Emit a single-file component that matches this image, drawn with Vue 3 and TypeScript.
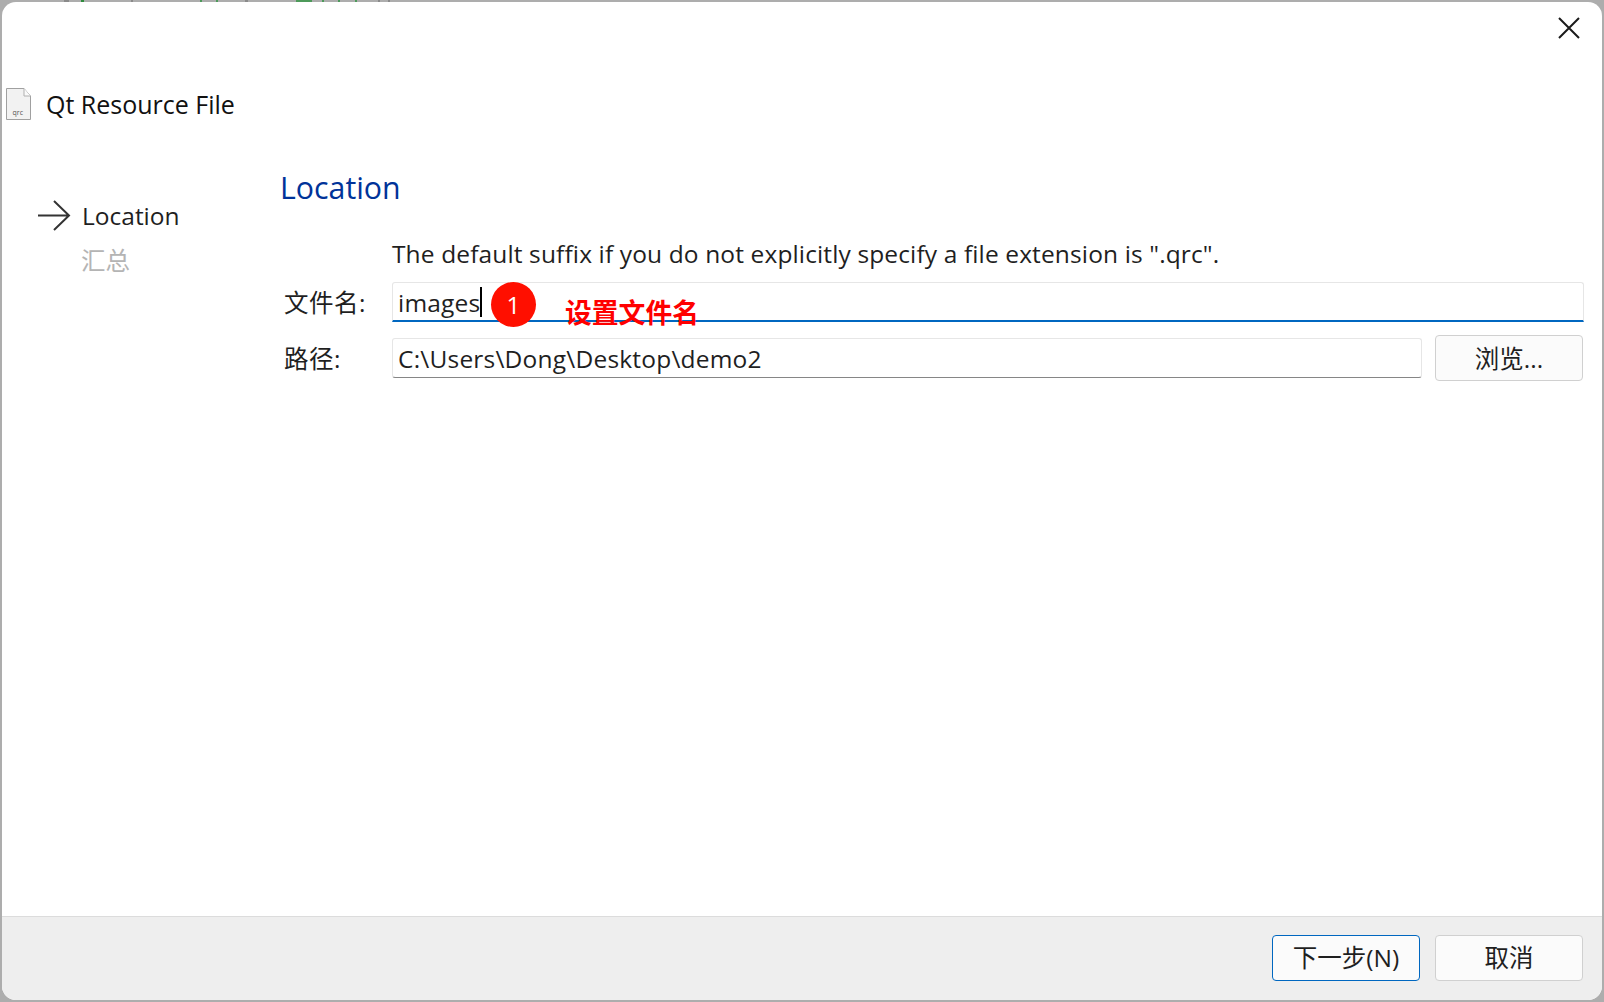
<script setup lang="ts">
const hint = 'The default suffix if you do not explicitly specify a file extension is ".qrc".'
const marks = [
  { x: 81, w: 3, c: '#2e8b3d' },
  { x: 64, w: 5, c: '#8a8a8a' },
  { x: 131, w: 2, c: '#8a8a8a' },
  { x: 200, w: 2, c: '#4d9a5a' },
  { x: 216, w: 2, c: '#4d9a5a' },
  { x: 245, w: 3, c: '#8a8a8a' },
  { x: 296, w: 16, c: '#4d9a5a' },
  { x: 322, w: 2, c: '#4d9a5a' },
  { x: 338, w: 2, c: '#4d9a5a' },
  { x: 355, w: 2, c: '#4d9a5a' },
  { x: 378, w: 2, c: '#8a8a8a' },
  { x: 388, w: 2, c: '#8a8a8a' }
]
</script>

<template>
  <div class="desk">
    <i v-for="m in marks" :key="m.x" class="mark" :style="{ left: m.x + 'px', width: m.w + 'px', background: m.c }"></i>
    <div class="window">
      <button class="close" aria-label="close">
        <svg width="22" height="22" viewBox="0 0 22 22"><path d="M1 1 L21 21 M21 1 L1 21" stroke="#1a1a1a" stroke-width="2" fill="none" /></svg>
      </button>
      <header class="head">
        <svg class="file" width="25" height="32" viewBox="0 0 25 32">
          <path d="M0.5 0.5 H18 L24.5 8 V31.5 H0.5 Z" fill="#f2f2f2" stroke="#a0a0a0" stroke-width="1" />
          <path d="M18 0.5 V8 H24.5" fill="#fafafa" stroke="#b0b0b0" stroke-width="1" />
          <text x="6.5" y="27" class="qrc">qrc</text>
        </svg>
        <span class="title">Qt Resource File</span>
      </header>
      <div class="body">
        <aside class="steps">
          <div class="step current">
            <svg class="arrow" width="33" height="31" viewBox="0 0 33 31"><path d="M0 15.5 H31 M16 1 L31 15.5 L16 30" stroke="#333" stroke-width="2" fill="none" /></svg>
            <span>Location</span>
          </div>
          <div class="step todo"><span>汇总</span></div>
        </aside>
        <main class="page">
          <h1 class="heading">Location</h1>
          <div class="form">
            <p class="hint">{{ hint }}</p>
            <label class="lab first">文件名:</label>
            <div class="input focus first">
              <span class="value">images</span><i class="caret"></i>
              <span class="badge">1</span>
              <span class="note">设置文件名</span>
            </div>
            <label class="lab second">路径:</label>
            <div class="path-row">
              <div class="input path"><span class="value">C:\Users\Dong\Desktop\demo2</span></div>
              <button class="btn browse">浏览...</button>
            </div>
          </div>
        </main>
      </div>
      <footer class="foot">
        <button class="btn primary">下一步(N)</button>
        <button class="btn">取消</button>
      </footer>
    </div>
  </div>
</template>

<style>
html, body { margin: 0; background: #adadad; }
</style>

<style scoped>
.desk {
  position: relative;
  width: 1604px;
  height: 1002px;
  box-sizing: border-box;
  padding: 2px;
  background: #adadad;
  font-family: "Open Sans", "Noto Sans CJK SC", sans-serif;
  color: #1f1f1f;
  overflow: hidden;
}
.mark { position: absolute; top: 0; height: 2px; }
.window {
  position: relative;
  height: 998px;
  background: #fff;
  border-radius: 14px;
  overflow: hidden;
  display: flex;
  flex-direction: column;
}
.close {
  position: absolute;
  top: 15px;
  right: 22px;
  padding: 0;
  border: 0;
  background: none;
  line-height: 0;
}
.head {
  height: 120px;
  box-sizing: border-box;
  padding: 86px 0 0 4px;
  display: flex;
  align-items: flex-start;
  gap: 15px;
}
.qrc { font: 7px "Open Sans", sans-serif; fill: #555; }
.title { font-size: 25px; line-height: 32px; color: #111; }
.body { flex: 1; display: flex; }
.steps { width: 278px; padding: 77px 0 0 36px; box-sizing: border-box; }
.step { display: flex; align-items: center; height: 44px; font-size: 24.5px; }
.step.current { height: 32px; gap: 11px; margin-bottom: 11px; }
.step.todo { padding-left: 43px; color: #b4b4b4; height: 34px; }
.page { flex: 1; padding: 44px 18px 0 0; }
.heading { margin: 0; font-size: 30.3px; font-weight: 400; line-height: 44px; color: #003399; }
.form {
  margin-top: 27px;
  display: grid;
  grid-template-columns: 112px 1fr;
  align-items: center;
}
.hint { grid-column: 2; margin: 0 0 11px; font-size: 24.5px; line-height: 34px; letter-spacing: 0.13px; white-space: nowrap; }
.lab { padding: 0 0 2px 4px; font-size: 24.5px; letter-spacing: 0.5px; white-space: nowrap; }
.input {
  box-sizing: border-box;
  height: 40px;
  padding-left: 5px;
  border: 1px solid #e6e6e6;
  border-bottom: 1px solid #868686;
  border-radius: 3px;
  display: flex;
  align-items: center;
  font-size: 24.5px;
  letter-spacing: 0.2px;
  position: relative;
  background: #fff;
}
.focus { padding-top: 1px; border-bottom: 2px solid #0067c0; border-radius: 3px 3px 0 0; }
.value { white-space: nowrap; }
.caret { width: 2px; height: 30px; background: #000; }
.badge {
  position: absolute;
  left: 98px;
  top: -1px;
  width: 45px;
  height: 45px;
  border-radius: 50%;
  background: #ff0f00;
  color: #fff;
  font-size: 24px;
  display: flex;
  align-items: center;
  justify-content: center;
}
.note {
  position: absolute;
  left: 172px;
  top: 13px;
  color: #f00;
  font-size: 26.8px;
  font-weight: 700;
  line-height: 34px;
  letter-spacing: 0;
  white-space: nowrap;
}
.second { margin-top: 13px; }
.path-row { display: flex; align-items: center; gap: 13px; margin-top: 13px; }
.path { flex: 1; margin: 0; }
.btn {
  box-sizing: border-box;
  width: 148px;
  height: 46px;
  padding: 0 0 4px;
  border: 1px solid #d0d0d0;
  border-radius: 4px;
  background: #fbfbfb;
  font: 24.5px "Open Sans", "Noto Sans CJK SC", sans-serif;
  color: #1f1f1f;
}
.browse { margin-right: 1px; padding-bottom: 2px; }
.primary { border-color: #0067c0; }
.foot {
  height: 84px;
  box-sizing: border-box;
  border-top: 1px solid #dcdcdc;
  background: #eeeeee;
  padding: 18px 19px 0 0;
  display: flex;
  justify-content: flex-end;
  align-items: flex-start;
  gap: 15px;
}
</style>
